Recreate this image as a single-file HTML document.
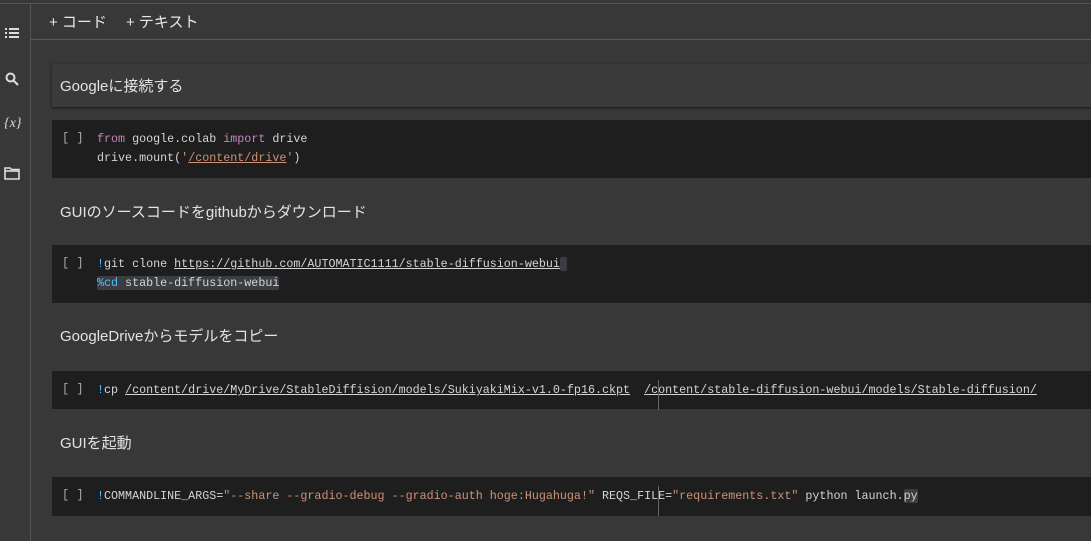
<!DOCTYPE html>
<html><head><meta charset="utf-8"><style>
body{margin:0;width:1091px;height:541px;background:#383838;overflow:hidden;position:relative;font-family:"Liberation Sans","Noto Sans CJK JP",sans-serif;color:#e3e3e3}
.top{position:absolute;left:0;top:0;width:1091px;height:3px;background:#383838;border-bottom:1px solid #555}
.side{position:absolute;left:0;top:4px;width:30px;height:537px;border-right:1px solid #555}
.tb{position:absolute;left:31px;top:4px;right:0;height:35px;border-bottom:1px solid #5a5a5a}
.tb span{position:absolute;top:7px;font-size:15px;color:#e8e8e8}
.h{position:absolute;left:60px;font-size:15px;color:#e3e3e3}
.card{position:absolute;left:52px;top:64px;right:0;height:43px;background:#3a3a3a;box-shadow:0 1px 3px rgba(0,0,0,.6)}
.code{position:absolute;left:52px;right:0;background:#1e1e1e}
.c{position:absolute;left:97px;font-family:"Liberation Mono",monospace;font-size:11.7px;color:#d4d4d4;white-space:pre;line-height:19px}
.br{position:absolute;left:62px;font-family:"Liberation Mono",monospace;font-size:12px;color:#aaa;white-space:pre}
.k{color:#c586c0}.s{color:#ce9178}.u{text-decoration:underline}.b{color:#4fc1ff}
.sel{background:#3a3d41;border-radius:2px}
</style></head><body>
<div class="top"></div>
<div class="side">
<svg style="position:absolute;left:4px;top:22px" width="16" height="14" viewBox="0 0 16 14" fill="#ddd"><rect x="1" y="2" width="2" height="2"/><rect x="5" y="2" width="10" height="2"/><rect x="1" y="6" width="2" height="2"/><rect x="5" y="6" width="10" height="2"/><rect x="1" y="10" width="2" height="2"/><rect x="5" y="10" width="10" height="2"/></svg>
<svg style="position:absolute;left:5px;top:68px" width="14" height="14" viewBox="0 0 14 14" fill="none" stroke="#ddd" stroke-width="2"><circle cx="5.5" cy="5.5" r="4"/><path d="M8.5 8.5L13 13"/></svg>
<div style="position:absolute;left:4px;top:112px;font-size:14px;color:#ddd;font-style:italic;font-family:'Liberation Serif',serif">{<i>x</i>}</div>
<svg style="position:absolute;left:4px;top:162px" width="16" height="14" viewBox="0 0 16 14" fill="none" stroke="#ddd" stroke-width="1.6"><path d="M1 2h5l1.5 1.5H15V13H1z"/><path d="M1 5h14"/></svg>
</div>
<div class="tb"><span style="left:18px">+ コード</span><span style="left:95px">+ テキスト</span></div>
<div class="card"></div>
<div class="h" style="top:75px">Googleに接続する</div>
<div class="code" style="top:120px;height:58px"></div>
<div class="br" style="top:131px">[ ]</div>
<div class="c" style="top:130px"><span class="k">from</span> google.colab <span class="k">import</span> drive
drive.mount(<span class="s">'<span class="u">/content/drive</span>'</span>)</div>
<div class="h" style="top:201px">GUIのソースコードをgithubからダウンロード</div>
<div class="code" style="top:245px;height:58px"></div>
<div class="br" style="top:256px">[ ]</div>
<div class="c" style="top:255px"><span class="b">!</span>git clone <span class="u">https://github.com/AUTOMATIC1111/stable-diffusion-webui</span><span class="sel"> </span>
<span class="sel"><span class="b">%cd</span> stable-diffusion-webui</span></div>
<div class="h" style="top:325px">GoogleDriveからモデルをコピー</div>
<div class="code" style="top:371px;height:38px"></div>
<div class="br" style="top:382px">[ ]</div>
<div class="c" style="top:381px"><span class="b">!</span>cp <span class="u">/content/drive/MyDrive/StableDiffision/models/SukiyakiMix-v1.0-fp16.ckpt</span>  <span class="u">/content/stable-diffusion-webui/models/Stable-diffusion/</span></div>
<div class="h" style="top:432px">GUIを起動</div>
<div class="code" style="top:477px;height:39px"></div>
<div class="br" style="top:488px">[ ]</div>
<div class="c" style="top:487px"><span class="b">!</span>COMMANDLINE_ARGS=<span class="s">"--share --gradio-debug --gradio-auth hoge:Hugahuga!"</span> REQS_FILE=<span class="s">"requirements.txt"</span> python launch.<span class="sel">py</span></div>
<div style="position:absolute;left:658px;top:380px;width:1px;height:30px;background:#666"></div>
<div style="position:absolute;left:658px;top:486px;width:1px;height:30px;background:#666"></div>
</body></html>
